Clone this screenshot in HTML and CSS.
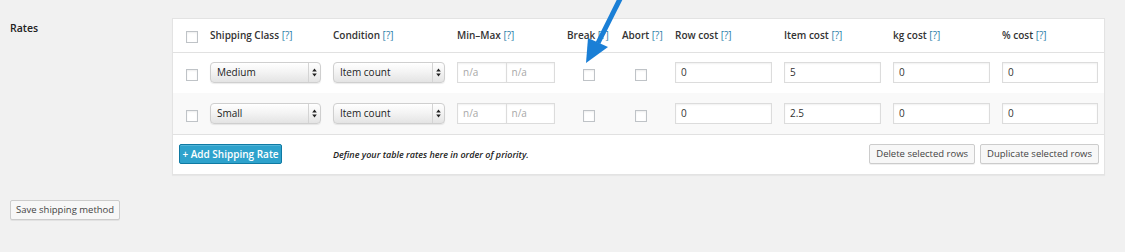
FILE: index.html
```html
<!DOCTYPE html>
<html>
<head>
<meta charset="utf-8">
<link rel="stylesheet" href="styles.css">
</head>
<body>
<div class="page">
  <div class="field-row">
    <div class="field-label">Rates</div>
    <div class="rates-box">
      <table class="rates">
        <colgroup>
          <col class="c-check"><col class="c-class"><col class="c-cond"><col class="c-minmax"><col class="c-break"><col class="c-abort"><col class="c-cost"><col class="c-cost"><col class="c-cost"><col class="c-cost-last">
        </colgroup>
        <thead>
          <tr>
            <th class="chk"><span class="cb"></span></th>
            <th>Shipping Class <a class="tip">[?]</a></th>
            <th>Condition <a class="tip">[?]</a></th>
            <th>Min–Max <a class="tip">[?]</a></th>
            <th>Break <a class="tip">[?]</a></th>
            <th>Abort <a class="tip">[?]</a></th>
            <th>Row cost <a class="tip">[?]</a></th>
            <th>Item cost <a class="tip">[?]</a></th>
            <th>kg cost <a class="tip">[?]</a></th>
            <th>% cost <a class="tip">[?]</a></th>
          </tr>
        </thead>
        <tbody>
          <tr>
            <td class="chk"><span class="cb"></span></td>
            <td><div class="sel"><span class="sel-text">Medium</span><span class="sel-arrow"><svg width="5" height="9" viewBox="0 0 5 9"><path d="M2.5 0.5 L4.8 3.6 H0.2 Z M2.5 8.5 L4.8 5.4 H0.2 Z" fill="#222"/></svg></span></div></td>
            <td><div class="sel"><span class="sel-text">Item count</span><span class="sel-arrow"><svg width="5" height="9" viewBox="0 0 5 9"><path d="M2.5 0.5 L4.8 3.6 H0.2 Z M2.5 8.5 L4.8 5.4 H0.2 Z" fill="#222"/></svg></span></div></td>
            <td><div class="minmax"><span class="inp ph">n/a</span><span class="inp ph second">n/a</span></div></td>
            <td class="center"><span class="cb"></span></td>
            <td class="center abort"><span class="cb"></span></td>
            <td><span class="inp">0</span></td>
            <td><span class="inp">5</span></td>
            <td><span class="inp">0</span></td>
            <td><span class="inp">0</span></td>
          </tr>
          <tr class="alt">
            <td class="chk"><span class="cb"></span></td>
            <td><div class="sel"><span class="sel-text">Small</span><span class="sel-arrow"><svg width="5" height="9" viewBox="0 0 5 9"><path d="M2.5 0.5 L4.8 3.6 H0.2 Z M2.5 8.5 L4.8 5.4 H0.2 Z" fill="#222"/></svg></span></div></td>
            <td><div class="sel"><span class="sel-text">Item count</span><span class="sel-arrow"><svg width="5" height="9" viewBox="0 0 5 9"><path d="M2.5 0.5 L4.8 3.6 H0.2 Z M2.5 8.5 L4.8 5.4 H0.2 Z" fill="#222"/></svg></span></div></td>
            <td><div class="minmax"><span class="inp ph">n/a</span><span class="inp ph second">n/a</span></div></td>
            <td class="center"><span class="cb"></span></td>
            <td class="center abort"><span class="cb"></span></td>
            <td><span class="inp">0</span></td>
            <td><span class="inp">2.5</span></td>
            <td><span class="inp">0</span></td>
            <td><span class="inp">0</span></td>
          </tr>
        </tbody>
      </table>
      <div class="rates-foot">
        <span class="btn-primary">+ Add Shipping Rate</span>
        <em class="foot-note">Define your table rates here in order of priority.</em>
        <div class="foot-actions">
          <span class="btn">Delete selected rows</span>
          <span class="btn">Duplicate selected rows</span>
        </div>
      </div>
    </div>
  </div>
  <div class="save-row">
    <span class="btn save">Save shipping method</span>
  </div>
  <svg class="arrow" width="50" height="70" viewBox="0 0 50 70">
    <line x1="46" y1="-3" x2="23" y2="43" stroke="#1a7fd6" stroke-width="5"/>
    <polygon points="13,38 33,47 11,63" fill="#1a7fd6"/>
  </svg>
</div>
</body>
</html>
```

FILE: styles.css
```css
* { box-sizing: border-box; }
html, body { margin: 0; padding: 0; }
body {
  background: #f1f1f1;
  font-family: "Open Sans", "Liberation Sans", sans-serif;
  color: #333;
  width: 1125px;
  height: 252px;
  overflow: hidden;
}
.page {
  position: relative;
  padding: 18px 20px 0 10px;
}
.field-row {
  display: flex;
  align-items: flex-start;
}
.field-label {
  width: 162px;
  flex: none;
  font-size: 10.5px;
  font-weight: 600;
  color: #222;
  padding-top: 3px;
  line-height: 14px;
}
.rates-box {
  flex: 1;
  background: #fff;
  border: 1px solid #e3e3e3;
  box-shadow: 0 1px 1px rgba(0,0,0,0.04);
}
.rates {
  width: 100%;
  border-collapse: collapse;
  table-layout: fixed;
}
.c-check { width: 31px; }
.c-class { width: 123px; }
.c-cond { width: 124px; }
.c-minmax { width: 110px; }
.c-break { width: 55px; }
.c-abort { width: 53px; }
.c-cost { width: 109px; }
.c-cost-last { width: 108px; }
.rates th {
  height: 33px;
  padding: 0 6px;
  text-align: left;
  font-size: 10px;
  font-weight: 600;
  color: #333;
  white-space: nowrap;
  border-bottom: 1px solid #e1e1e1;
  vertical-align: middle;
}
.tip {
  color: #2a7ea8;
  font-weight: 400;
}
.rates td {
  height: 41px;
  padding: 0 6px;
  vertical-align: middle;
}
.rates tbody tr:last-child td { border-bottom: 1px solid #e1e1e1; }
.rates tr.alt td { background: #f9f9f9; }
.rates .chk { padding: 0 0 0 13px; }
.rates th.chk { padding-top: 2px; }
.rates td.chk { padding-top: 2px; }
.rates td.center { text-align: center; padding: 2px 0 0; }
.rates td.center.abort { padding-right: 3px; }
.cb {
  display: inline-block;
  width: 12px;
  height: 12px;
  border: 1px solid #bfc3c7;
  background: #fff;
  box-shadow: inset 0 1px 2px rgba(0,0,0,0.07);
  vertical-align: middle;
}
.sel {
  display: flex;
  height: 21px;
  border: 1px solid #cfcfcf;
  border-radius: 4px;
  background: linear-gradient(#ffffff 0%, #f4f4f4 45%, #e4e4e4 100%);
  box-shadow: 0 1px 1px rgba(0,0,0,0.08);
  font-size: 10px;
  color: #222;
}
.sel-text {
  flex: 1;
  padding-left: 6px;
  line-height: 19px;
}
.sel-arrow {
  width: 12px;
  border-left: 1px solid #d4d4d4;
  display: flex;
  align-items: center;
  justify-content: center;
}
.sel-arrow svg { display: block; }
.inp {
  display: block;
  height: 21px;
  border: 1px solid #dcdcdc;
  background: #fff;
  box-shadow: inset 0 1px 2px rgba(0,0,0,0.06);
  font-size: 10px;
  line-height: 19px;
  padding: 0 5px;
  color: #333;
}
.inp.ph { color: #a8a8a8; }
.minmax { display: flex; }
.minmax .inp { flex: 1; }
.minmax .inp.second { border-left: none; }
.rates-foot {
  display: flex;
  align-items: center;
  height: 39px;
  padding: 0 5px 0 6px;
}
.btn-primary {
  display: inline-block;
  width: 103px;
  height: 20px;
  line-height: 18px;
  text-align: center;
  background: #2ea2cc;
  border: 1px solid #0f7aa3;
  border-radius: 2px;
  color: #fff;
  font-size: 10px;
  font-weight: 600;
  box-shadow: inset 0 1px 0 rgba(120,200,230,0.5);
}
.foot-note {
  margin-left: 51px;
  font-size: 9px;
  font-weight: 600;
  font-style: italic;
  color: #222;
}
.foot-actions {
  margin-left: auto;
  display: flex;
  gap: 5px;
}
.btn {
  display: inline-block;
  height: 20px;
  line-height: 18px;
  padding: 0 6px;
  background: #f7f7f7;
  border: 1px solid #cccccc;
  border-radius: 2px;
  box-shadow: 0 1px 0 rgba(0,0,0,0.06);
  font-size: 9.5px;
  color: #444;
  white-space: nowrap;
}
.save-row {
  margin-top: 21px;
}
.save { padding: 0 5px; }
.arrow {
  position: absolute;
  left: 575px;
  top: 0;
}
```
